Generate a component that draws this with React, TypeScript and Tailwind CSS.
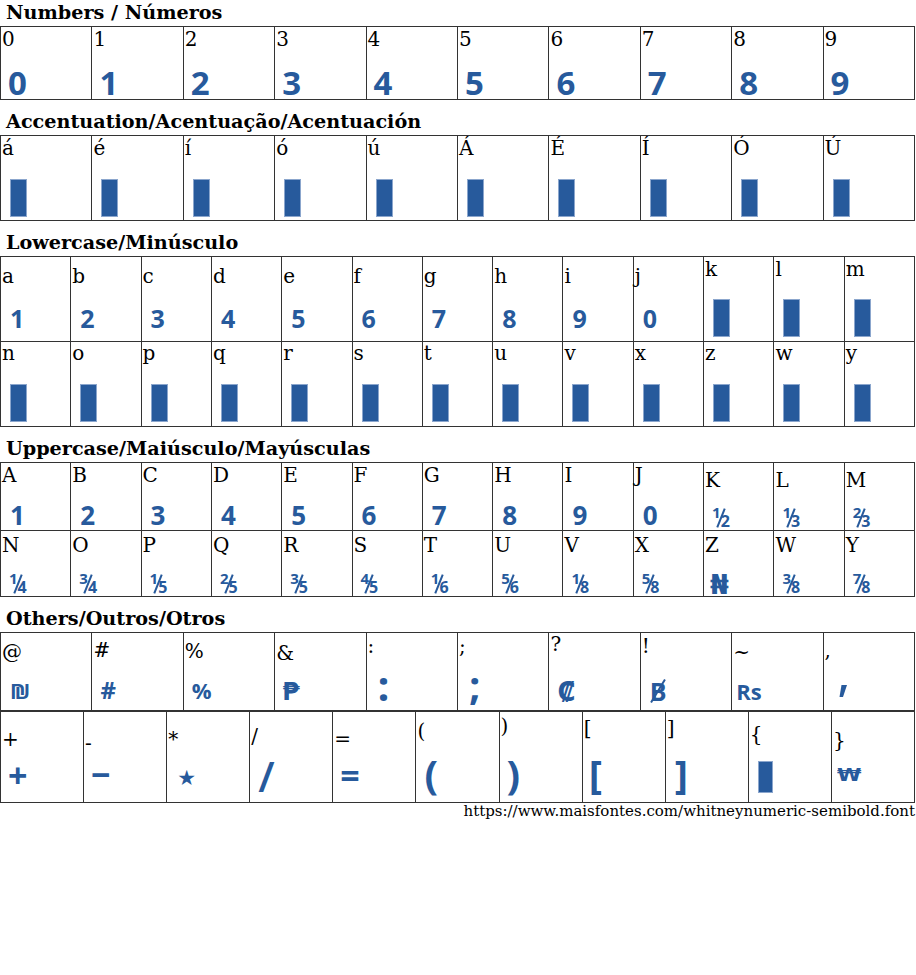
import * as React from "react";

type Spec = {
  label: string;
  lt: string;
  box: string;
  glyph: React.ReactNode;
};

// one glyph of the specimen; leading 0.78 puts the baseline at the bottom of the box
function G({ className, children }: { className: string; children: React.ReactNode }) {
  return <span className={`whitespace-nowrap leading-[0.78] ${className}`}>{children}</span>;
}

// the "missing glyph" block
function Bar({ className }: { className: string }) {
  return <span className={`block border border-[#8ba6cd] bg-[#275a9c] ${className}`} />;
}

function Frac({ n, d }: { n: string; d: string }) {
  return (
    <span className="inline-flex h-[21px] items-start leading-none">
      <span className="-mt-[2px] text-[15px]">{n}</span>
      <span className="mx-[-1px] mt-[1px] h-[20px] w-[2px] rotate-[22deg] bg-[#275a9c]" />
      <span className="-mb-[1px] self-end text-[16px]">{d}</span>
    </span>
  );
}

function Title({ children, first }: { children: React.ReactNode; first?: boolean }) {
  return (
    <div className={`pl-[6px] text-[19.2px] font-bold leading-[26px] ${first ? "pt-0" : "pt-[9px]"}`}>
      {children}
    </div>
  );
}

function Table({ grid, cells }: { grid: string; cells: Spec[] }) {
  return (
    <div className={`grid border-l border-t border-[#333] ${grid}`}>
      {cells.map((c, i) => (
        <div key={i} className="flex min-w-0 flex-col border-b border-r border-[#333]">
          <div className={`pl-px text-[20px] leading-[23px] ${c.lt}`}>{c.label}</div>
          <div className={`flex font-['Open_Sans','DejaVu_Sans',sans-serif] font-bold text-[#275a9c] ${c.box}`}>
            {c.glyph}
          </div>
        </div>
      ))}
    </div>
  );
}

const numbers: Spec[] = "0123456789".split("").map((c) => ({
  label: c,
  lt: "mt-px",
  box: "h-[45px] items-end pl-[7px]",
  glyph: <G className="text-[33px]">{c}</G>,
}));

const accents: Spec[] = ["á", "é", "í", "ó", "ú", "Á", "É", "Í", "Ó", "Ú"].map((c) => ({
  label: c,
  lt: "mt-px",
  box: "pl-[9px]",
  glyph: <Bar className="mt-[19px] h-[38px] w-[17px]" />,
}));

const digits = ["1", "2", "3", "4", "5", "6", "7", "8", "9", "0"];

const lower: Spec[] = [
  ...digits.map((d, i) => ({
    label: "abcdefghij"[i],
    lt: "mt-[8px]",
    box: "h-[40px] items-end pl-[9px]",
    glyph: <G className="text-[25px]">{d}</G>,
  })),
  ...["k", "l", "m"].map((c) => ({
    label: c,
    lt: "mt-px",
    box: "pl-[9px]",
    glyph: <Bar className="mt-[18px] h-[38px] w-[17px]" />,
  })),
  ...["n", "o", "p", "q", "r", "s", "t", "u", "v", "x", "z", "w", "y"].map((c) => ({
    label: c,
    lt: "mt-0",
    box: "pl-[9px]",
    glyph: <Bar className="mt-[19px] h-[38px] w-[17px]" />,
  })),
];

const fracs1: [string, string, string][] = [
  ["K", "1", "2"],
  ["L", "1", "3"],
  ["M", "2", "3"],
];

const fracs2: [string, string, string][] = [
  ["N", "1", "4"],
  ["O", "3", "4"],
  ["P", "1", "5"],
  ["Q", "2", "5"],
  ["R", "3", "5"],
  ["S", "4", "5"],
  ["T", "1", "6"],
  ["U", "5", "6"],
  ["V", "1", "8"],
  ["X", "5", "8"],
  ["Z", "", ""],
  ["W", "3", "8"],
  ["Y", "7", "8"],
];

const upper: Spec[] = [
  ...digits.map((d, i) => ({
    label: "ABCDEFGHIJ"[i],
    lt: "mt-px",
    box: "h-[38px] items-end pl-[9px]",
    glyph: <G className="text-[26px]">{d}</G>,
  })),
  ...fracs1.map(([c, n, d]) => ({
    label: c,
    lt: "mt-[6px]",
    box: "items-start pt-[15px] pl-[8px]",
    glyph: <Frac n={n} d={d} />,
  })),
  ...fracs2.map(([c, n, d]) =>
    c === "Z"
      ? {
          label: c,
          lt: "mt-[3px]",
          box: "items-start pt-[16px] pl-[6px]",
          glyph: <G className="text-[27px]">₦</G>,
        }
      : {
          label: c,
          lt: "mt-[3px]",
          box: "items-start pt-[16px] pl-[8px]",
          glyph: <Frac n={n} d={d} />,
        }
  ),
];

const others1: Spec[] = [
  { label: "@", lt: "mt-[8px]", box: "h-[35px] items-end pl-[9px]", glyph: <G className="text-[22px]">₪</G> },
  { label: "#", lt: "mt-[6px]", box: "h-[38px] items-end pl-[8px]", glyph: <G className="text-[24px]">#</G> },
  { label: "%", lt: "mt-[7px]", box: "h-[36px] items-end pl-[8px]", glyph: <G className="text-[22px]">%</G> },
  { label: "&", lt: "mt-[9px]", box: "h-[35px] items-end pl-[7px]", glyph: <G className="text-[25px]">₱</G> },
  { label: ":", lt: "mt-[2px]", box: "h-[44px] items-end pl-[11px]", glyph: <G className="text-[42px]">:</G> },
  { label: ";", lt: "mt-[2px]", box: "h-[42px] items-end pl-[11px]", glyph: <G className="text-[40px]">;</G> },
  { label: "?", lt: "mt-0", box: "h-[45px] items-end pl-[8px]", glyph: <G className="text-[26px]">₡</G> },
  {
    label: "!",
    lt: "mt-[2px]",
    box: "h-[43px] items-end pl-[9px]",
    glyph: (
      <G className="relative text-[25px]">
        B
        <span className="absolute left-1/2 top-1/2 h-[2px] w-[27px] -translate-x-1/2 -translate-y-1/2 -rotate-[59deg] bg-[#275a9c]" />
      </G>
    ),
  },
  { label: "~", lt: "mt-[8px]", box: "h-[36px] items-end pl-[4px]", glyph: <G className="text-[22px]">Rs</G> },
  {
    label: ",",
    lt: "mt-[6px]",
    box: "pl-[15px]",
    glyph: (
      <svg className="mt-[23px]" width="8" height="12" viewBox="0 0 8 12">
        <path d="M2.5 0H8L4 12H0.5Z" fill="#275a9c" />
      </svg>
    ),
  },
];

const others2: Spec[] = [
  { label: "+", lt: "mt-[16px]", box: "h-[38px] items-end pl-[7px]", glyph: <G className="text-[34px]">+</G> },
  { label: "-", lt: "mt-[20px]", box: "h-[33px] items-end pl-[7px]", glyph: <G className="text-[34px]">−</G> },
  { label: "*", lt: "mt-[16px]", box: "h-[34px] items-end pl-[10px]", glyph: <G className="text-[21px]">★</G> },
  { label: "/", lt: "mt-[13px]", box: "h-[45px] items-end pl-[8px]", glyph: <G className="text-[42px] font-semibold">/</G> },
  { label: "=", lt: "mt-[16px]", box: "h-[38px] items-end pl-[7px]", glyph: <G className="text-[34px]">=</G> },
  { label: "(", lt: "mt-[8px]", box: "h-[46px] items-end pl-[8px]", glyph: <G className="text-[40px]">(</G> },
  { label: ")", lt: "mt-[3px]", box: "h-[51px] items-end pl-[7px]", glyph: <G className="text-[40px]">)</G> },
  { label: "[", lt: "mt-[5px]", box: "h-[49px] items-end pl-[6px]", glyph: <G className="text-[40px]">[</G> },
  { label: "]", lt: "mt-[5px]", box: "h-[49px] items-end pl-[9px]", glyph: <G className="text-[40px]">]</G> },
  { label: "{", lt: "mt-[11px]", box: "pl-[9px]", glyph: <Bar className="mt-[15px] h-[32px] w-[15px]" /> },
  {
    label: "}",
    lt: "mt-[17px]",
    box: "h-[29px] items-end pl-[5px]",
    glyph: <G className="origin-left scale-x-[1.3] text-[17px]">₩</G>,
  },
];

export default function App() {
  return (
    <div className="w-[915px] bg-white font-['DejaVu_Serif',serif] text-black">
      <Title first>Numbers / Números</Title>
      <Table grid="grid-cols-10 grid-rows-[73px]" cells={numbers} />

      <Title>Accentuation/Acentuação/Acentuación</Title>
      <Table grid="grid-cols-10 grid-rows-[85px]" cells={accents} />

      <Title>Lowercase/Minúsculo</Title>
      <Table grid="grid-cols-13 grid-rows-[85px_85px]" cells={lower} />

      <Title>Uppercase/Maiúsculo/Mayúsculas</Title>
      <Table grid="grid-cols-13 grid-rows-[68px_66px]" cells={upper} />

      <Title>Others/Outros/Otros</Title>
      <Table grid="grid-cols-10 grid-rows-[78px]" cells={others1} />
      <Table grid="grid-cols-11 grid-rows-[91px]" cells={others2} />

      <div className="text-right text-[15px] leading-[17px]">
        https://www.maisfontes.com/whitneynumeric-semibold.font
      </div>
    </div>
  );
}
